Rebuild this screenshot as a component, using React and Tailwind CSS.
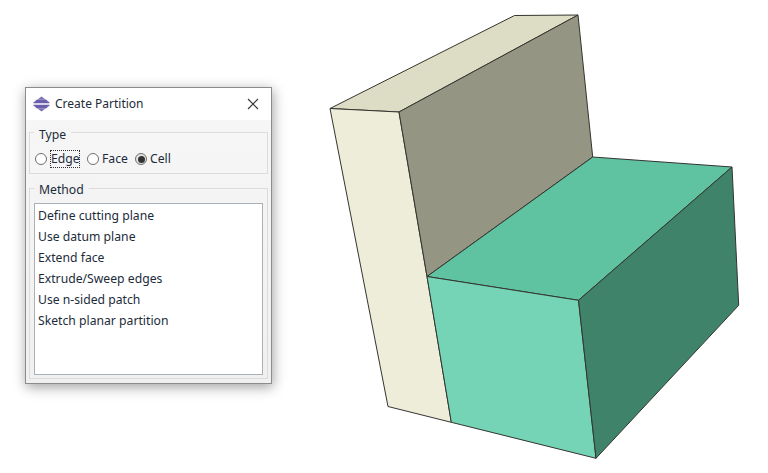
const methods = ["Define cutting plane","Use datum plane","Extend face","Extrude/Sweep edges","Use n-sided patch","Sketch planar partition"];

function Radio({ checked }) {
  return (
    <span className={"flex h-[12px] w-[12px] shrink-0 items-center justify-center rounded-full border border-[#6f6f6f] " + (checked ? "bg-[#e4e4e4]" : "bg-white")}>
      {checked && <span className="h-[7px] w-[7px] rounded-full bg-[#333333]" />}
    </span>
  );
}

export default function App() {
  return (
    <div className="flex h-[473px] w-[768px] items-start overflow-hidden bg-white font-['Noto_Sans','Open_Sans',sans-serif] text-[12.2px] text-[#1c2b3a]">
      <div className="ml-[25px] mt-[87px] flex h-[297px] w-[247px] shrink-0 flex-col border border-[#8c8c8c] bg-[#f1f1f1] shadow-[1px_3px_12px_rgba(0,0,0,0.38)]">
        <div className="flex h-[32px] shrink-0 items-center bg-white pl-[7px] pr-[12px]">
          <svg width="17" height="16" viewBox="0 0 17 16" className="shrink-0">
            <polygon points="8.5,0.5 12.5,3.5 4.5,3.5" fill="#7a70b8" />
            <polygon points="4,3.5 13,3.5 17,7 0,7" fill="#6a60aa" />
            <polygon points="0,9 17,9 13,12.5 4,12.5" fill="#6a60aa" />
            <polygon points="8.5,15.5 12.5,12.5 4.5,12.5" fill="#7a70b8" />
            <rect x="0.5" y="7" width="16" height="2" fill="#d6d3ea" />
          </svg>
          <span className="ml-[5px] text-[12px] leading-none">Create Partition</span>
          <svg width="12" height="12" viewBox="0 0 12 12" className="ml-auto shrink-0" stroke="#333333" strokeWidth="1.1">
            <path d="M1 1 L11 11 M11 1 L1 11" />
          </svg>
        </div>
        <div className="flex min-h-0 flex-1 flex-col bg-gradient-to-b from-[#f6f6f6] to-[#f0f0f0] px-[3px] pb-[4px] pt-[5px]">
          <fieldset className="h-[49px] shrink-0 border border-[#dcdcdc]">
            <legend className="ml-[4px] translate-y-[3px] bg-[#f5f5f5] px-[5px] text-[12.2px] leading-[14px]">Type</legend>
            <div className="ml-[5px] mt-[11px] flex items-center">
              <Radio />
              <span className="ml-[3px] flex h-[18px] w-[30px] items-center border border-dotted border-[#333333] leading-none">Edge</span>
              <span className="ml-[7px]"><Radio /></span>
              <span className="ml-[3px] w-[33px] leading-none">Face</span>
              <Radio checked />
              <span className="ml-[3px] leading-none">Cell</span>
            </div>
          </fieldset>
          <fieldset className="mt-[7px] flex min-h-0 flex-1 flex-col border border-[#dcdcdc] px-[4px] pb-[3px]">
            <legend className="translate-y-[2px] bg-[#f3f3f3] px-[5px] text-[12.2px] leading-[14px]">Method</legend>
            <ul className="mt-[8px] h-[173px] border border-[#a9b0b6] bg-white px-[3px] pt-[2px]">
              {methods.map((m) => (
                <li key={m} className="flex h-[21px] items-center leading-none">{m}</li>
              ))}
            </ul>
          </fieldset>
        </div>
      </div>
      <svg width="443" height="473" viewBox="325 0 443 473" className="ml-[53px] shrink-0" stroke="#33352f" strokeWidth="1" strokeLinejoin="round">
        <polygon points="330,108.5 514.5,15.5 578,15 399,112" fill="#dddcc5" />
        <polygon points="330,108.5 399,112 427,276.5 451.3,422.3 388,406.5" fill="#eeedda" />
        <polygon points="399,112 578,15 592.7,157 427,276.5" fill="#959583" />
        <polygon points="427,276.5 592.7,157 732,167 578.5,300.3" fill="#5fc2a0" />
        <polygon points="427,276.5 578.5,300.3 596,458.3 451.3,422.3" fill="#74d4b5" />
        <polygon points="578.5,300.3 732,167 738.7,305.3 596,458.3" fill="#3f836b" />
      </svg>
    </div>
  );
}
